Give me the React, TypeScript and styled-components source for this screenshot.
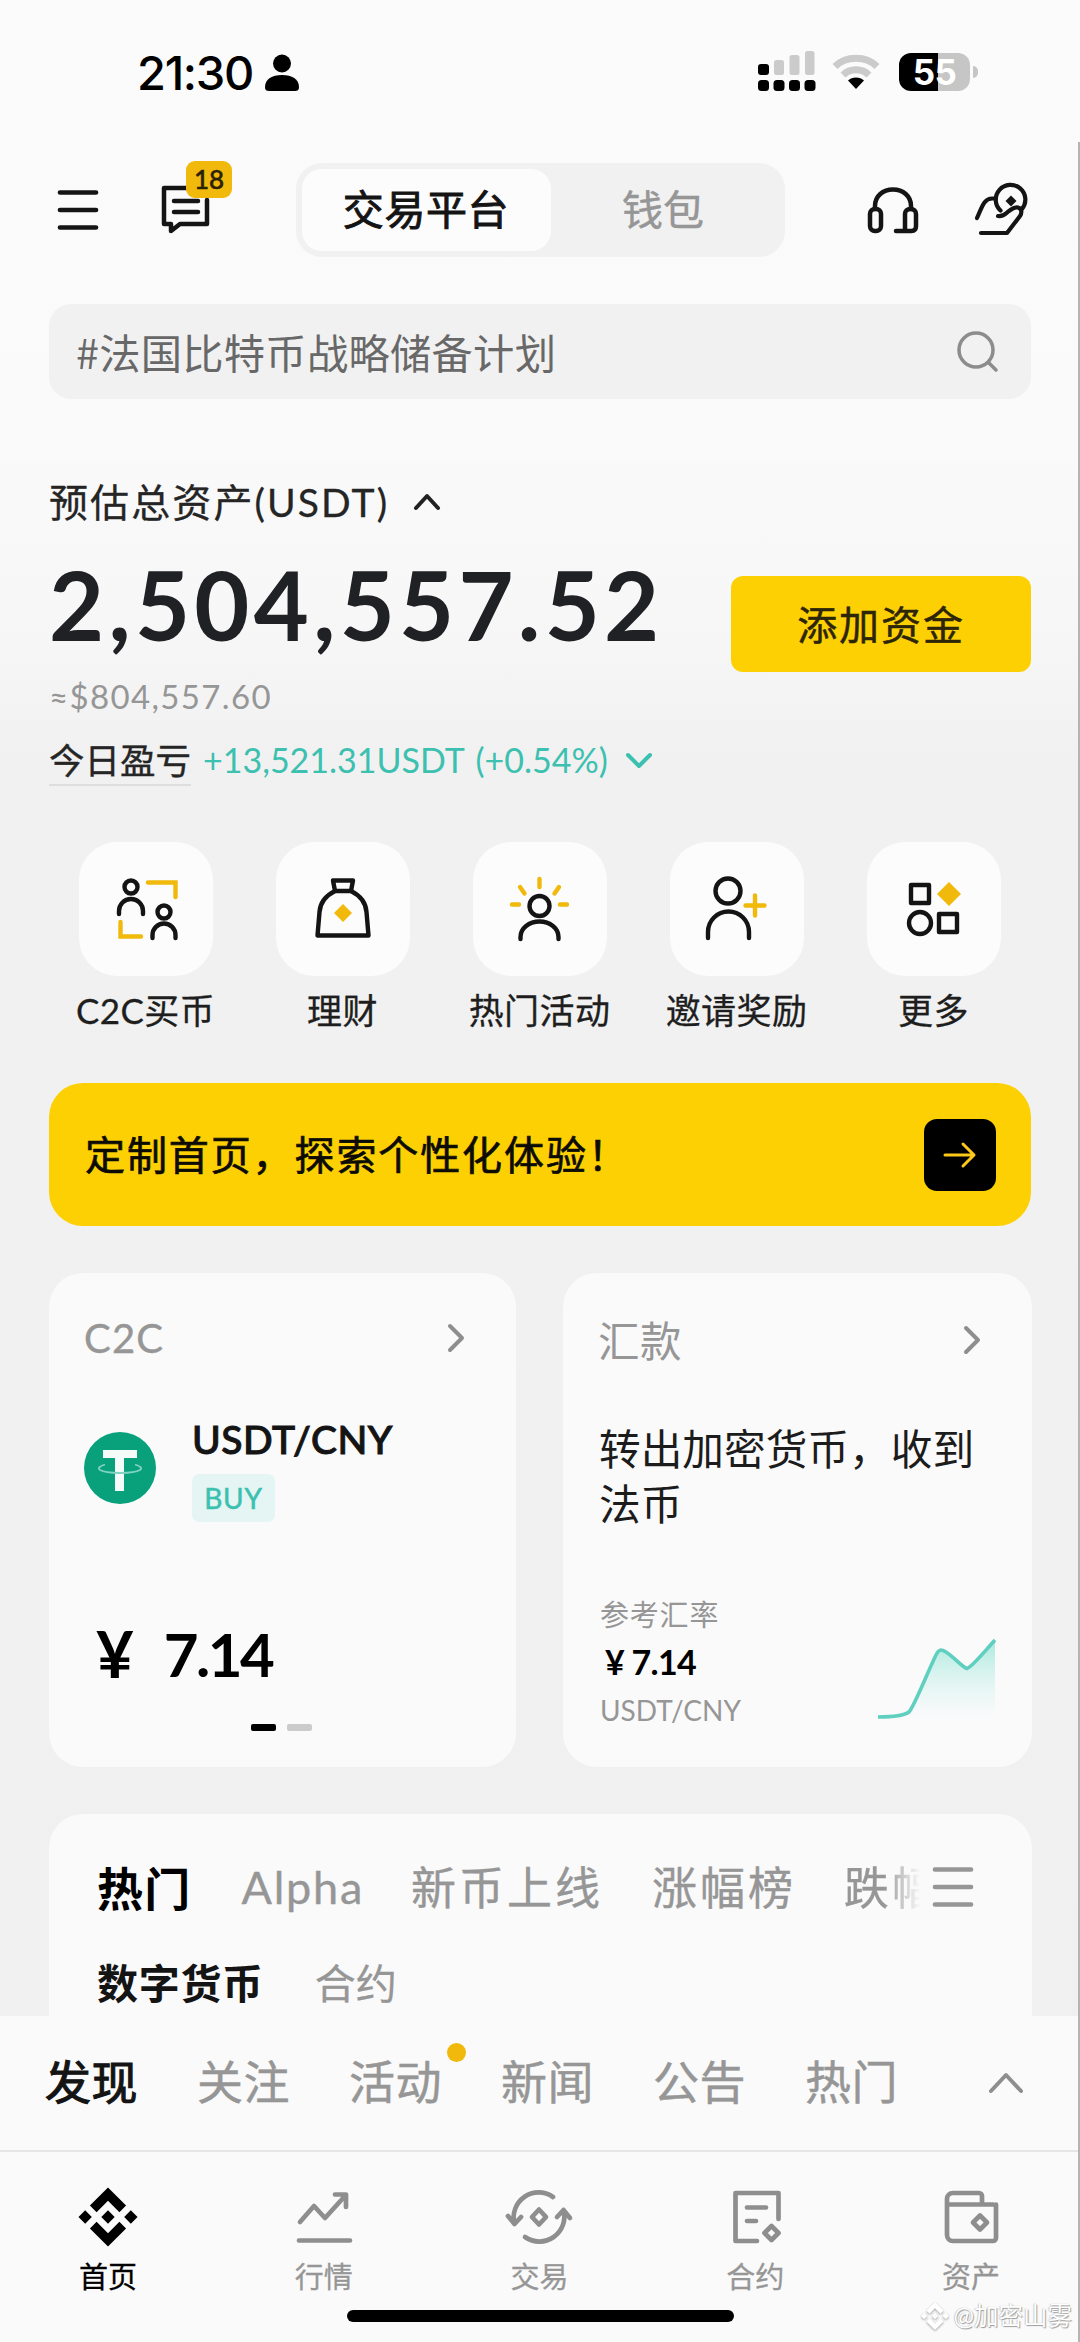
import React from "react";
import styled, { createGlobalStyle } from "styled-components";

const INK = "#141414";
const GREY = "#969696";
const GOLD = "#f0b90b";
const TEAL = "#3cc0b0";

const GlobalStyle = createGlobalStyle`
  * { box-sizing: border-box; }
  body { margin: 0; background: #fafafa; }
`;

const Page = styled.div`
  position: relative;
  width: 1080px;
  height: 2342px;
  overflow: hidden;
  display: flex;
  flex-direction: column;
  background: linear-gradient(#fbfbfb 0, #fafafa 440px, #f7f7f7 620px, #f1f1f1 760px, #f0f0f0 100%);
  font-family: Lato, "Noto Sans CJK SC", sans-serif;
  color: ${INK};
`;

const ScrollEdge = styled.div`
  position: absolute;
  top: 142px;
  right: 0;
  bottom: 0;
  width: 2px;
  background: #b4b4b4;
`;

const Txt = styled.span<{
  $s: number;
  $c?: string;
  $w?: number;
  $ls?: number;
  $lh?: number;
  $stroke?: number;
  $cjk?: boolean;
  $lift?: number;
}>`
  display: block;
  white-space: nowrap;
  font-size: ${(p) => p.$s}px;
  line-height: ${(p) => p.$lh ?? Math.round(p.$s * 1.2)}px;
  color: ${(p) => p.$c ?? INK};
  font-weight: ${(p) => p.$w ?? 400};
  letter-spacing: ${(p) => p.$ls ?? 0}px;
  margin-bottom: ${(p) => (p.$lift ?? 0) * 2}px;
  -webkit-text-stroke: ${(p) => p.$stroke ?? 0}px ${(p) => p.$c ?? INK};
  ${(p) => (p.$cjk ? `font-family: "Noto Sans CJK SC", sans-serif;` : "")}
`;

const Icon = styled.svg`
  display: block;
  flex: none;
  fill: none;
  stroke: currentColor;
  overflow: visible;
`;

/* ---------- status bar ---------- */
const StatusBar = styled.div`
  height: 142px;
  padding: 50px 102px 0 137px;
  display: flex;
  justify-content: space-between;
  align-items: flex-start;
`;
const Clock = styled.div`
  display: flex;
  gap: 11px;
  height: 45px;
  align-items: center;
  font-family: Inter, sans-serif;
  font-size: 47px;
  font-weight: 500;
  letter-spacing: -1.3px;
  color: #000;
`;
const StatusIcons = styled.div`
  display: flex;
  align-items: flex-start;
`;
const Battery = styled.div`
  position: relative;
  width: 71px;
  height: 38px;
  margin: 3px 8px 0 19px;
  border-radius: 12px;
  background: linear-gradient(90deg, #000 0 39px, #c6c6c6 39px);
  color: #fff;
  font: 700 35px/38px Inter, sans-serif;
  text-align: center;
  letter-spacing: -0.5px;
  &::after {
    content: "";
    position: absolute;
    left: 74px;
    top: 13px;
    width: 5px;
    height: 12px;
    border-radius: 0 5px 5px 0;
    background: #c6c6c6;
  }
`;

/* ---------- header ---------- */
const Header = styled.header`
  height: 162px;
  padding: 0 50px 0 56px;
  display: flex;
  align-items: flex-start;
`;
const ChatButton = styled.div`
  position: relative;
  margin: 42px 0 0 60px;
`;
const Badge = styled.div`
  position: absolute;
  left: 26px;
  top: -23px;
  width: 46px;
  height: 37px;
  border-radius: 9px;
  background: ${GOLD};
  display: grid;
  place-items: center;
`;
const Segment = styled.div`
  margin: 21px 0 0 86px;
  width: 489px;
  height: 94px;
  padding: 6px;
  border-radius: 26px;
  background: #f1f1f1;
  display: grid;
  grid-template-columns: 249px 1fr;
`;
const SegmentItem = styled.div<{ $on?: boolean }>`
  border-radius: 20px;
  background: ${(p) => (p.$on ? "#fcfcfd" : "transparent")};
  display: flex;
  justify-content: center;
  align-items: center;
  padding-right: ${(p) => (p.$on ? 1 : 4)}px;
`;

const Search = styled.div`
  margin: 0 49px;
  height: 95px;
  flex: none;
  border-radius: 22px;
  background: #f1f1f1;
  padding: 0 31px 0 27px;
  display: flex;
  justify-content: space-between;
  align-items: center;
`;

/* ---------- balance ---------- */
const Balance = styled.section`
  height: 443px;
  flex: none;
  padding: 71px 49px 0;
  display: flex;
  justify-content: space-between;
`;
const BalanceInfo = styled.div`
  display: flex;
  flex-direction: column;
`;
const Line = styled.div<{ $h: number; $gap?: number }>`
  display: flex;
  align-items: center;
  height: ${(p) => p.$h}px;
  gap: ${(p) => p.$gap ?? 0}px;
`;
const Underlined = styled.div`
  border-bottom: 2px solid #dedede;
  height: 52px;
  display: flex;
  align-items: center;
`;
const Profit = styled.div`
  font-size: 34px;
  line-height: 42px;
  color: ${TEAL};
  word-spacing: 3px;
  margin-right: 5px;
  white-space: nowrap;
`;
const AddFunds = styled.button`
  margin: 106px 0 0;
  border: 0;
  width: 300px;
  height: 96px;
  border-radius: 12px;
  background: #fcd002;
  display: flex;
  justify-content: center;
  align-items: center;
`;

/* ---------- shortcuts ---------- */
const Shortcuts = styled.nav`
  height: 241px;
  flex: none;
  padding: 0 47px;
  display: grid;
  grid-template-columns: repeat(5, 197px);
`;
const Shortcut = styled.div`
  display: flex;
  flex-direction: column;
  align-items: center;
  gap: 12px;
`;
const Tile = styled.div`
  width: 134px;
  height: 134px;
  border-radius: 38px;
  background: #fcfcfd;
  color: ${INK};
`;

const Banner = styled.div`
  height: 143px;
  flex: none;
  margin: 0 49px;
  border-radius: 34px;
  background: #fcd002;
  padding: 0 35px 0 36px;
  display: flex;
  align-items: center;
  justify-content: space-between;
`;
const ArrowBox = styled.div`
  width: 72px;
  height: 72px;
  border-radius: 13px;
  background: #000;
  color: #fcc91a;
  display: grid;
  place-items: center;
`;

/* ---------- cards ---------- */
const Cards = styled.section`
  margin: 47px 48px 0 49px;
  height: 494px;
  flex: none;
  display: grid;
  grid-template-columns: 467px 469px;
  justify-content: space-between;
`;
const Card = styled.article`
  border-radius: 34px;
  background: #fafafb;
  padding: 38px 35px 0 35px;
  display: flex;
  flex-direction: column;
`;
const CardHead = styled.div<{ $pad?: number }>`
  display: flex;
  justify-content: space-between;
  align-items: center;
  height: 54px;
  padding: ${(p) => p.$pad ?? 0}px 15px 0 0;
`;
const Pair = styled.div`
  display: flex;
  gap: 36px;
  margin-top: 43px;
  height: 140px;
`;
const PairInfo = styled.div`
  display: flex;
  flex-direction: column;
  align-items: flex-start;
`;
const Buy = styled.div`
  margin-top: 4px;
  width: 83px;
  height: 48px;
  border-radius: 7px;
  background: #e4f5f3;
  display: grid;
  place-items: center;
`;
const Price = styled.div`
  display: flex;
  align-items: center;
  gap: 30px;
  height: 80px;
  margin: 66px 0 0 12px;
`;
const Dots = styled.div`
  display: flex;
  gap: 11px;
  margin: 30px 0 0 167px;
`;
const Dot = styled.i<{ $on?: boolean }>`
  width: 25px;
  height: 7px;
  border-radius: 2px;
  background: ${(p) => (p.$on ? "#000" : "#cbcbcb")};
`;
const Headline = styled.p`
  margin: 55px 0 0 1px;
  font: 400 41.7px/55px "Noto Sans CJK SC", sans-serif;
  color: #1c1c1c;
`;
const Rate = styled.div`
  display: flex;
  justify-content: space-between;
  margin: 58px 0 0 2px;
`;
const RateText = styled.div`
  display: flex;
  flex-direction: column;
`;
const RateValue = styled.div`
  margin-left: 5px;
  font-size: 34px;
  line-height: 48px;
  font-weight: 700;
  letter-spacing: -0.7px;
  color: #000;
`;

/* ---------- market ---------- */
const Market = styled.section`
  margin: 47px 48px 0 49px;
  height: 202px;
  flex: none;
  border-radius: 34px 34px 0 0;
  background: #fafafb;
  padding: 38px 0 0 48px;
  overflow: hidden;
`;
const MarketTabs = styled.div`
  display: grid;
  grid-template-columns: 144.5px 169.5px 241px 192px 87px 44px;
  align-items: center;
  height: 70px;
`;
const SubTabs = styled.div`
  display: flex;
  align-items: center;
  height: 118px;
  gap: 51px;
`;
const FadeTab = styled.div`
  width: 100px;
  mask-image: linear-gradient(90deg, #000 40px, transparent 76px);
`;

const Feed = styled.section`
  height: 136px;
  flex: none;
  background: #fafafa;
  border-bottom: 2px solid #e6e6e6;
  padding: 0 56px 0 45px;
  display: flex;
  align-items: center;
  justify-content: space-between;
`;
const FeedTabs = styled.div`
  display: grid;
  grid-template-columns: repeat(6, 152px);
`;
const FeedTab = styled.div`
  position: relative;
`;
const NewDot = styled.i`
  position: absolute;
  left: 98px;
  top: -3px;
  width: 19px;
  height: 19px;
  border-radius: 50%;
  background: ${GOLD};
`;

/* ---------- bottom navigation ---------- */
const BottomNav = styled.nav`
  position: relative;
  flex: 1;
  background: #fafafa;
  display: grid;
  grid-template-columns: repeat(5, 215.8px);
  align-items: start;
  padding-top: 30px;
`;
const NavItem = styled.div<{ $on?: boolean }>`
  display: flex;
  flex-direction: column;
  align-items: center;
  gap: 3px;
  color: ${(p) => (p.$on ? "#000" : "#8e8e8e")};
`;
const HomeBar = styled.div`
  position: absolute;
  left: 347px;
  bottom: 20px;
  width: 387px;
  height: 12px;
  border-radius: 6px;
  background: #000;
`;
const Watermark = styled.div`
  position: absolute;
  right: 8px;
  bottom: 9px;
  display: flex;
  align-items: center;
  gap: 5px;
  color: #fff;
  font: 400 24.5px/34px Lato, "Noto Sans CJK SC", sans-serif;
  letter-spacing: 0;
  text-shadow: 1px 1px 1px #9c9c9c, -0.5px -0.5px 1px #b0b0b0;
`;
const WatermarkLogo = styled.svg`
  width: 28px;
  height: 28px;
  overflow: visible;
  filter: drop-shadow(0 1px 1px #9c9c9c);
`;

const BINANCE =
  "M16.624 13.9202l2.7175 2.7154-7.353 7.353-7.353-7.352 2.7175-2.7164 4.6355 4.6595 4.6356-4.6595zm4.6366-4.6366L24 12l-2.7154 2.7164L18.5682 12l2.6924-2.7164zm-9.272.001l2.7163 2.6914-2.7164 2.7174v-.001L9.2721 12l2.7164-2.7154zm-9.2722-.001L5.4088 12l-2.6914 2.6924L0 12l2.7164-2.7164zM11.9885.0115l7.353 7.329-2.7174 2.7154-4.6356-4.6356-4.6355 4.6595-2.7174-2.7154 7.353-7.353z";

const Menu = ({ color, pad = 0 }: { color: string; pad?: number }) => (
  <Icon width={44} height={42} viewBox="0 0 44 42" color={color} strokeWidth={4.7} strokeLinecap="round" style={{ marginTop: pad }}>
    <path d="M4 3.5H40M4 21H40M4 38.5H40" />
  </Icon>
);

const Chevron = ({ d, w, h, color }: { d: string; w: number; h: number; color: string }) => (
  <Icon width={w} height={h} viewBox={`0 0 ${w} ${h}`} color={color} strokeWidth={4} strokeLinecap="round" strokeLinejoin="round">
    <path d={d} />
  </Icon>
);

const shortcuts: { label: string; art: React.ReactNode }[] = [
  {
    label: "C2C买币",
    art: (
      <>
        <circle cx="52" cy="45" r="6.5" />
        <path d="M40 72v-3a12 12 0 0 1 24 0v3" />
        <circle cx="85" cy="70" r="6.5" />
        <path d="M73.500 96v-3a11.500 11.500 0 0 1 23 0v3" />
        <path d="M69 40.500H96.500V55M41.500 80V94.500H62" stroke={GOLD} strokeLinejoin="miter" />
      </>
    ),
  },
  {
    label: "理财",
    art: (
      <>
        <path d="M57 38.500H77L75 49H59Z" />
        <path d="M59 49C47 55 44 63 43.500 70L41.500 93.500H92.500L90.500 70C90 63 87 55 75 49" />
        <path d="M67 62l9 9-9 9-9-9z" fill={GOLD} stroke="none" />
      </>
    ),
  },
  {
    label: "热门活动",
    art: (
      <>
        <circle cx="66.500" cy="64" r="10" />
        <path d="M47.500 97V95a19 15.500 0 0 1 38 0v2" />
        <path d="M66.500 37v8M47 45l4.500 6.500M86 45l-4.500 6.500M39 62.500h7M87 62.500h7" stroke={GOLD} />
      </>
    ),
  },
  {
    label: "邀请奖励",
    art: (
      <>
        <circle cx="58" cy="49" r="12.500" />
        <path d="M38 96v-6a20.500 20.500 0 0 1 41 0v6" />
        <path d="M85 53.500v20M75.500 63.500h19" stroke={GOLD} />
      </>
    ),
  },
  {
    label: "更多",
    art: (
      <>
        <rect x="44" y="43" width="18" height="18" />
        <path d="M82 40l12 12-12 12-12-12z" fill={GOLD} stroke="none" />
        <circle cx="53" cy="81" r="11" />
        <rect x="72" y="72" width="18" height="18" />
      </>
    ),
  },
];

const navItems: { label: string; art: React.ReactNode }[] = [
  {
    label: "首页",
    art: <path d={BINANCE} transform="translate(5.500 5.500) scale(2.46)" fill="currentColor" stroke="none" />,
  },
  {
    label: "行情",
    art: <path d="M11 40L25 24L36 36L56 14M46 12.500H57V25M10 58.500H61" />,
  },
  {
    label: "交易",
    art: (
      <>
        <path d="M49 15A25 25 0 0 0 10.500 42M4 34L10.500 42L17 35" />
        <path d="M21 55A25 25 0 0 0 59.500 28M53 35L59.500 28L66 36" />
        <path d="M35 27.500l7 7.500-7 7.500-7-7.500z" />
      </>
    ),
  },
  {
    label: "合约",
    art: (
      <>
        <path d="M37 59H15.500V11H58.500V37M27 25.500H46M27 39H36" />
        <path d="M51.500 44l7 7-7 7-7-7z" />
      </>
    ),
  },
  {
    label: "资产",
    art: (
      <>
        <path d="M60 22.500V56a3 3 0 0 1-3 3H17a6 6 0 0 1-6-6V17a6 6 0 0 1 6-6H43a3 3 0 0 1 3 3V22.500M11 22.500H57a3 3 0 0 1 3 3" />
        <path d="M44 33.500l7 7-7 7-7-7z" />
      </>
    ),
  },
];

const feed = ["发现", "关注", "活动", "新闻", "公告", "热门"];

export default function App() {
  return (
    <Page>
      <GlobalStyle />
      <StatusBar>
        <Clock>
          21:30
          <Icon width="36" height="38" viewBox="0 0 36 38" stroke="none">
            <circle cx="18" cy="9.500" r="9" fill="#000" stroke="none" />
            <path d="M1 33C1 25 8 21 18 21s17 4 17 12c0 3-1.500 4-4 4H5c-2.500 0-4-1-4-4z" fill="#000" stroke="none" />
          </Icon>
        </Clock>
        <StatusIcons>
          <Icon width="58" height="41" viewBox="0 0 58 41">
            <g fill="#000" stroke="none">
              <rect x="0" y="14" width="11" height="11" rx="3" />
              {[0, 15.5, 31, 46.5].map((x) => (
                <rect key={x} x={x} y="30" width="11" height="11" rx="3.500" />
              ))}
            </g>
            <g fill="#cbcbcb" stroke="none">
              <rect x="16" y="10" width="10" height="15" rx="2.500" />
              <rect x="31.500" y="5" width="10" height="20" rx="2.500" />
              <rect x="47" y="1" width="9.500" height="24" rx="2.500" />
            </g>
          </Icon>
          <Icon width="48" height="36" viewBox="0 0 48 36" style={{ margin: "4px 0 0 16px" }}>
            <path d="M3 12.500C14 1.500 34 1.500 45 12.500" stroke="#cbcbcb" strokeWidth="7" />
            <path d="M11 21C18 14 30 14 37 21" stroke="#cbcbcb" strokeWidth="7" />
            <path d="M16 26.500C20 22.500 28 22.500 32 26.500L24 35Z" fill="#000" stroke="none" />
          </Icon>
          <Battery>55</Battery>
        </StatusIcons>
      </StatusBar>

      <Header>
        <Menu color={INK} pad={47} />
        <ChatButton>
          <Icon width="50" height="50" viewBox="0 0 50 50" strokeWidth="4.500" strokeLinejoin="round" strokeLinecap="round">
            <path d="M28 4H4V40H11V47L20 40H47V16M14 17H38M14 28H38" />
          </Icon>
          <Badge>
            <Txt $s={26} $w={500} $c="#2a2105" $stroke={0.5}>18</Txt>
          </Badge>
        </ChatButton>
        <Segment>
          <SegmentItem $on>
            <Txt $cjk $s={41} $stroke={0.9} $lh={60} $ls={0.6} $lift={3}>交易平台</Txt>
          </SegmentItem>
          <SegmentItem>
            <Txt $cjk $s={41} $c={GREY} $stroke={0.5} $lh={60} $lift={3}>钱包</Txt>
          </SegmentItem>
        </Segment>
        <Icon width="52" height="48" viewBox="0 0 52 48" strokeWidth="4.500" strokeLinecap="round" strokeLinejoin="round" style={{ margin: "45px 0 0 82px" }}>
          <path d="M8 22V19C8 9 16 2.500 26 2.500S44 9 44 19V22" />
          <rect x="3" y="22" width="11" height="22" rx="5" />
          <path d="M29 44H44.500C47.500 44 49 42 49 39V27C49 24 47 22 43.500 22S38 24 38 27V44" />
        </Icon>
        <Icon width="54" height="54" viewBox="0 0 54 54" strokeWidth="4.200" strokeLinecap="round" strokeLinejoin="round" style={{ margin: "41px 0 0 54px" }}>
          <path d="M4 35C9 24 11 15.500 19 15.500H23" />
          <path d="M27.500 27.500A14.800 14.800 0 1 1 49 26" />
          <path d="M25 33C31 34 33 30 36 28C39 26 41 23.500 45 24.500C49 25.500 49 30 47 33L34 50H8" />
          <path d="M38 12.500l5.500 5.500-5.500 5.500-5.500-5.500z" fill="currentColor" stroke="none" />
        </Icon>
      </Header>

      <Search>
        <Txt $cjk $s={41.3} $c="#686868" $lh={60} $ls={0.25} $lift={1}>#法国比特币战略储备计划</Txt>
        <Icon width="44" height="44" viewBox="0 0 44 44" strokeWidth="3.500" color="#8c8c8c" strokeLinecap="round">
          <circle cx="20" cy="20" r="17" />
          <path d="M33 33L40 40" />
        </Icon>
      </Search>

      <Balance>
        <BalanceInfo>
          <Line $h={64} $gap={24}>
            <Txt $s={39} $c="#252525" $ls={2.1} $lh={60} $stroke={0.3}>预估总资产(USDT)</Txt>
            <Chevron w={28} h={18} d="M3 15L14 3L25 15" color="#222" />
          </Line>
          <Line $h={140}>
            <Txt $s={95} $w={700} $c="#202124" $ls={4.3} $lh={110}>2,504,557.52</Txt>
          </Line>
          <Line $h={44}>
            <Txt $s={33} $c={GREY} $ls={1.35}>≈$804,557.60</Txt>
          </Line>
          <Line $h={84} $gap={12}>
            <Underlined>
              <Txt $cjk $s={35.5} $c="#252525" $stroke={0.4} $lh={50}>今日盈亏</Txt>
            </Underlined>
            <Profit>+13,521.31USDT (+0.54%)</Profit>
            <Chevron w={28} h={18} d="M3 4L14 15L25 4" color={TEAL} />
          </Line>
        </BalanceInfo>
        <AddFunds>
          <Txt $cjk $s={40} $c="#2c2508" $ls={1.9} $lh={60} $stroke={0.5} $lift={1.5}>添加资金</Txt>
        </AddFunds>
      </Balance>

      <Shortcuts>
        {shortcuts.map((s) => (
          <Shortcut key={s.label}>
            <Tile>
              <Icon width="134" height="134" viewBox="0 0 134 134" strokeWidth="4.400" strokeLinecap="round" strokeLinejoin="round">
                {s.art}
              </Icon>
            </Tile>
            <Txt $s={35} $c="#1e1e1e" $stroke={0.3} $lh={44} $ls={0.4}>{s.label}</Txt>
          </Shortcut>
        ))}
      </Shortcuts>

      <Banner>
        <Txt $cjk $s={40} $ls={1.9} $c="#0c0c05" $stroke={0.7} $lh={60} $lift={2}>定制首页，探索个性化体验！</Txt>
        <ArrowBox>
          <Icon width="34" height="28" viewBox="0 0 34 28" strokeWidth="3" strokeLinecap="round" strokeLinejoin="round">
            <path d="M2 14H31M20 3L31 14L20 25" />
          </Icon>
        </ArrowBox>
      </Banner>

      <Cards>
        <Card>
          <CardHead>
            <Txt $s={40} $c={GREY} $stroke={0.4} $ls={1.2}>C2C</Txt>
            <Chevron w={20} h={30} d="M4 3L16 15L4 27" color="#8e8e8e" />
          </CardHead>
          <Pair>
            <Icon width="72" height="72" viewBox="0 0 72 72" style={{ marginTop: 24 }}>
              <circle cx="36" cy="36" r="36" fill="#08a17c" stroke="none" />
              <path d="M19 18H53V26H40V59H31V26H19Z" fill="#f4fbf9" stroke="none" />
              <path d="M21 32.500C9 36 15 41 36 41S63 36 51 32.500" stroke="#7fd3c0" strokeWidth="1.800" />
            </Icon>
            <PairInfo>
              <Txt $s={39} $w={500} $lh={62} $stroke={1} $ls={0.5}>USDT/CNY</Txt>
              <Buy>
                <Txt $s={28} $c={TEAL} $stroke={0.5} $ls={0.8}>BUY</Txt>
              </Buy>
            </PairInfo>
          </Pair>
          <Price>
            <Txt $s={65} $w={700} $c="#000" $lift={1.5}>¥</Txt>
            <Txt $s={60} $w={700} $c="#000" $ls={-2.5}>7.14</Txt>
          </Price>
          <Dots>
            <Dot $on />
            <Dot />
          </Dots>
        </Card>
        <Card>
          <CardHead $pad={1}>
            <Txt $cjk $s={41.5} $c={GREY} $lh={60} $ls={0.5}>汇款</Txt>
            <Chevron w={20} h={32} d="M4 5L16 17L4 29" color="#8e8e8e" />
          </CardHead>
          <Headline>
            转出加密货币，收到
            <br />
            法币
          </Headline>
          <Rate>
            <RateText>
              <Txt $cjk $s={29} $c={GREY} $ls={0.8} $lh={50}>参考汇率</Txt>
              <RateValue>¥ 7.14</RateValue>
              <Txt $s={28} $c={GREY} $lh={48}>USDT/CNY</Txt>
            </RateText>
            <Icon width="119" height="84" viewBox="0 0 119 84" style={{ marginTop: 49 }}>
              <defs>
                <linearGradient id="area" x1="0" y1="0" x2="0" y2="1">
                  <stop offset="0" stopColor="#8fe3d3" stopOpacity="0.75" />
                  <stop offset="0.850" stopColor="#d4f3ed" stopOpacity="0.150" />
                  <stop offset="1" stopColor="#fff" stopOpacity="0" />
                </linearGradient>
              </defs>
              <path d="M1 80C20 80 27 78 31 75C36 70 51 32 58 18C61 12 63 11 68 15C77 21 84 29 89 30C94 29 106 15 117 3V84H1Z" fill="url(#area)" stroke="none" />
              <path d="M0 80C20 80 27 78 31 75C36 70 51 32 58 18C61 12 63 12 68 15C77 21 84 30 89 31.500C94 30 106 15 117 3" stroke="#5fcfbf" strokeWidth="3.600" />
            </Icon>
          </Rate>
        </Card>
      </Cards>

      <Market>
        <MarketTabs>
          <Txt $cjk $s={46} $w={700} $c="#000" $lh={66} $ls={1.2} $lift={1.5}>热门</Txt>
          <Txt $s={45} $c={GREY} $stroke={0.4} $lh={66} $ls={1.8}>Alpha</Txt>
          <Txt $cjk $s={45} $c={GREY} $ls={3} $lh={66} $stroke={0.4} $lift={1.5}>新币上线</Txt>
          <Txt $cjk $s={45} $c={GREY} $ls={3} $lh={66} $stroke={0.4} $lift={1.5}>涨幅榜</Txt>
          <FadeTab>
            <Txt $cjk $s={45} $c={GREY} $ls={3} $lh={66} $stroke={0.4} $lift={1.5}>跌幅</Txt>
          </FadeTab>
          <Menu color={GREY} />
        </MarketTabs>
        <SubTabs>
          <Txt $cjk $s={41} $w={700} $lh={60} $ls={0.7}>数字货币</Txt>
          <Txt $cjk $s={41} $c={GREY} $lh={60} $stroke={0.3}>合约</Txt>
        </SubTabs>
      </Market>

      <Feed>
        <FeedTabs>
          {feed.map((f, i) => (
            <FeedTab key={f}>
              <Txt $cjk $s={46} $c={i ? GREY : INK} $stroke={i ? 0.5 : 1.1} $lh={66} $ls={0.4} $lift={4}>{f}</Txt>
              {f === "活动" && <NewDot />}
            </FeedTab>
          ))}
        </FeedTabs>
        <Chevron w={36} h={22} d="M3 19L18 3L33 19" color="#8e8e8e" />
      </Feed>

      <BottomNav>
        {navItems.map((n, i) => (
          <NavItem key={n.label} $on={i === 0}>
            <Icon width="70" height="70" viewBox="0 0 70 70" strokeWidth="4.700" strokeLinecap="round" strokeLinejoin="round">
              {n.art}
            </Icon>
            <Txt $cjk $s={29} $c={i ? GREY : "#000"} $stroke={0.3} $lh={40}>{n.label}</Txt>
          </NavItem>
        ))}
        <HomeBar />
        <Watermark>
          <WatermarkLogo viewBox="0 0 24 24">
            <path d={BINANCE} fill="#fff" />
          </WatermarkLogo>
          @加密山雾
        </Watermark>
      </BottomNav>
      <ScrollEdge />
    </Page>
  );
}
